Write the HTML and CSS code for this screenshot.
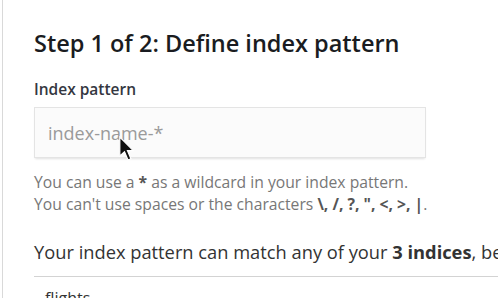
FILE: index.html
```html
<!DOCTYPE html>
<html>
<head>
<meta charset="utf-8">
<link rel="stylesheet" href="styles.css">
</head>
<body>
<div class="panel">
  <h1 class="title">Step 1 of 2: Define index pattern</h1>
  <label class="label">Index pattern</label>
  <div class="field">
    <span class="placeholder">index-name-*</span>
  </div>
  <div class="help">
    <p>You can use a <b>*</b> as a wildcard in your index pattern.</p>
    <p>You can't use spaces or the characters <b>\, /, ?, ", &lt;, &gt;, |</b>.</p>
  </div>
  <p class="match">Your index pattern can match any of your <b>3 indices</b>, below.</p>
  <div class="list">
    <div class="row">flights</div>
  </div>
</div>
<svg class="cursor" width="20" height="28" viewBox="0 0 16 24"><path d="M1 1 L1 17 L5 13.5 L8 20.5 L10.5 19.5 L7.5 12.5 L12.5 12.5 Z" fill="#111" stroke="#fff" stroke-width="1"/></svg>
</body>
</html>
```
FILE: styles.css
```css
html, body { margin: 0; padding: 0; background: #fff; overflow: hidden; }
body { width: 498px; height: 298px; position: relative; font-family: "Open Sans", "DejaVu Sans", sans-serif; }
.panel {
  margin-left: 2px;
  border-left: 1px solid #d9d9d9;
  padding: 29px 0 0 31px;
  height: 298px;
  box-sizing: border-box;
  white-space: nowrap;
  overflow: hidden;
}
.title { margin: 0; font-size: 23.5px; font-weight: 600; color: #1a1c21; line-height: 28px; }
.label { display: block; margin-top: 22px; font-size: 15.5px; font-weight: 600; color: #343741; line-height: 20px; }
.field {
  box-sizing: border-box;
  margin-top: 8px;
  width: 392px; height: 51px;
  background: #fbfbfb;
  border: 1px solid #e4e4e4;
  box-shadow: 0 2px 2px -1px rgba(0,0,0,0.12);
  display: flex; align-items: center;
  padding-left: 13px;
}
.placeholder { font-size: 18px; color: #9a9a9a; }
.help { margin-top: 13px; font-size: 15.7px; color: #777; line-height: 22px; }
.help p { margin: 0; }
.help b { color: #555; }
.match { margin: 25px 0 0; font-size: 18.3px; color: #333; line-height: 24px; }
.match b { font-weight: 700; }
.list { margin-top: 12px; border-top: 1px solid #d3d3d3; }
.row { padding: 10px 11px; font-size: 16px; color: #333; line-height: 22px; }
.cursor { position: absolute; left: 118px; top: 136px; }
```
